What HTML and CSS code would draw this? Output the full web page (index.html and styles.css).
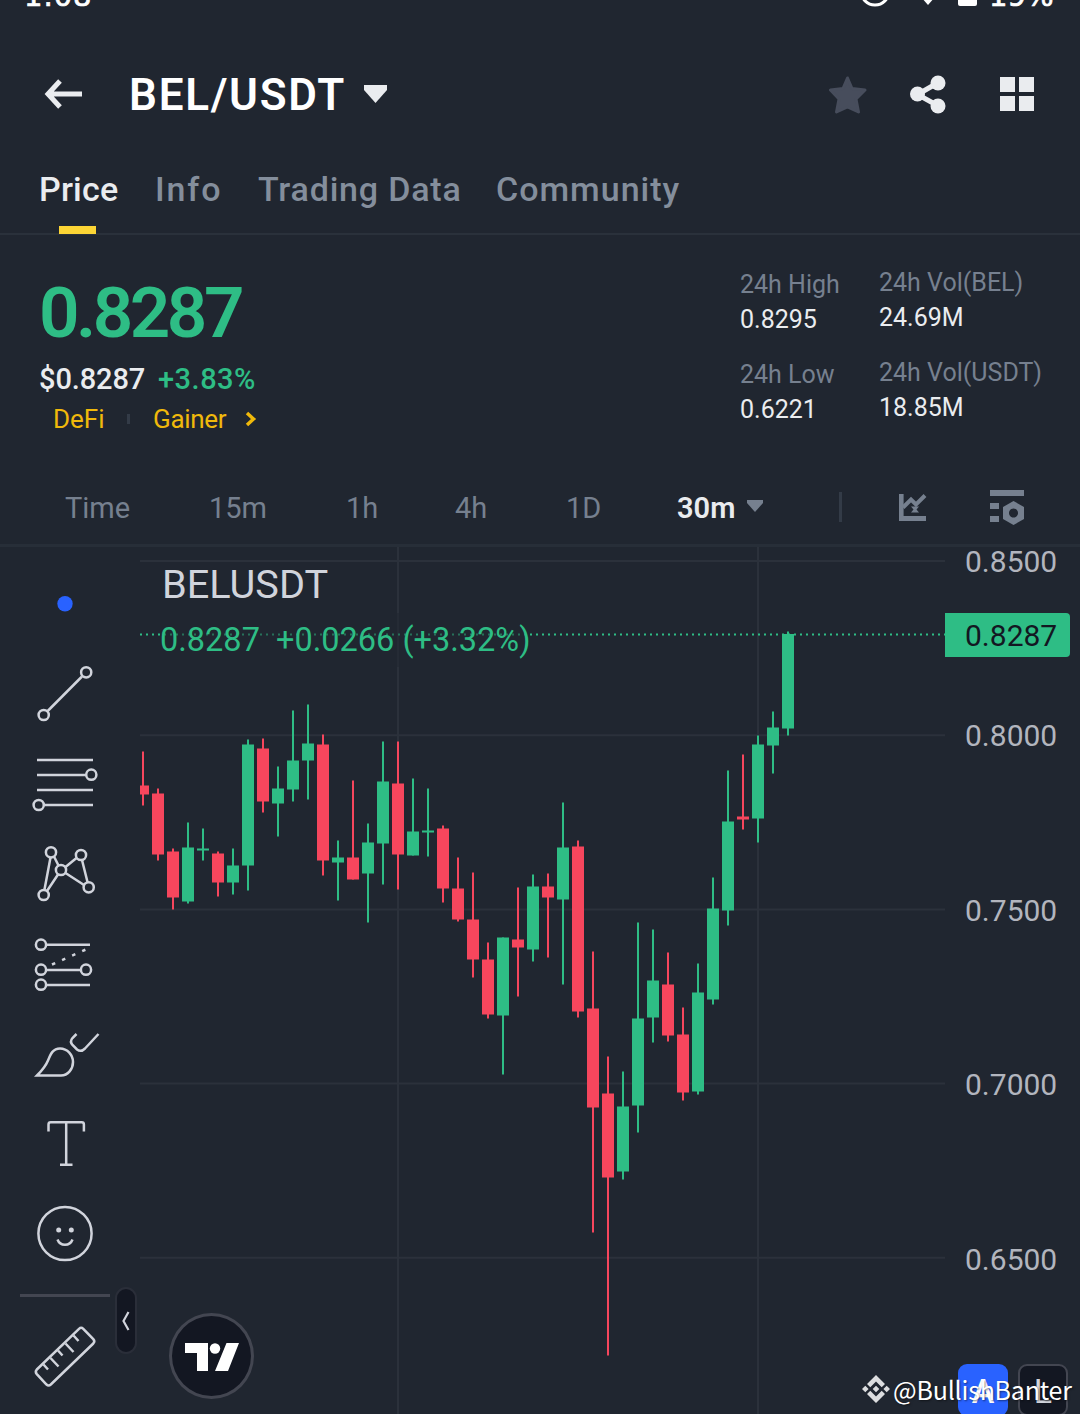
FILE: index.html
```html
<!DOCTYPE html>
<html lang="en">
<head>
  <meta charset="utf-8">
  <title>BEL/USDT</title>
  <link rel="stylesheet" href="styles.css">
</head>
<body>
  <div class="page">
    <div class="status">
      <span class="clock">1:08</span>
      <svg class="status-icons" width="120" height="8" viewBox="860 0 120 8">
        <circle cx="875" cy="-9" r="14" fill="none" stroke="#fff" stroke-width="3"/>
        <path d="M921-3h14l-7 8z" fill="#fff"/>
        <rect x="958" y="-20" width="19" height="26" rx="2" fill="#fff"/>
      </svg>
      <span class="battery">19%</span>
    </div>

    <div class="header">
      <svg class="back" width="40" height="32" viewBox="0 0 40 32">
        <path d="M17 3L5 16l12 13M5 16h34" fill="none" stroke="#eaecef" stroke-width="5"/>
      </svg>
      <h1 class="title">BEL/USDT</h1>
      <svg class="caret" width="24" height="18" viewBox="0 0 24 18">
        <path d="M0 0h23v5L11.500 18 0 5z" fill="#eaecef"/>
      </svg>
      <div class="actions">
        <svg width="38" height="40" viewBox="0 0 38 40">
          <path d="M18.500 3l4.500 10.500 13 1.500-9 9 2.500 13-11-5-11 5L10 24 1.500 15l12.500-1.500z" fill="#474d5c" stroke="#474d5c" stroke-width="3" stroke-linejoin="round"/>
        </svg>
        <svg width="36" height="40" viewBox="0 0 36 40">
          <path d="M27.500 9L7.500 20.500l20 11" fill="none" stroke="#eaecef" stroke-width="5"/>
          <g fill="#eaecef">
            <circle cx="28" cy="9" r="7.500"/>
            <circle cx="7.500" cy="20" r="7.500"/>
            <circle cx="28" cy="32" r="7.500"/>
          </g>
        </svg>
        <svg width="34" height="36" viewBox="0 0 34 36">
          <path d="M0 1h15v15H0zM19 1h15v15H19zM0 20h15v15H0zM19 20h15v15H19z" fill="#eaecef"/>
        </svg>
      </div>
    </div>

    <div class="tabs">
      <a class="tab active">Price</a>
      <a class="tab info">Info</a>
      <a class="tab data">Trading Data</a>
      <a class="tab community">Community</a>
    </div>

    <div class="summary">
      <div class="quote">
        <div class="last">0.8287</div>
        <div class="sub"><span class="usd">$0.8287</span><span class="change">+3.83%</span></div>
        <div class="tags">
          <span class="defi">DeFi</span>
          <i class="tag-line"></i>
          <span class="gainer">Gainer</span>
          <svg width="12" height="16" viewBox="0 0 12 16"><path d="M2 2l6.500 6L2 14" fill="none" stroke="#f0b90b" stroke-width="3.500"/></svg>
        </div>
      </div>
      <div class="stats">
        <div class="stat-col">
          <div class="label high">24h High</div>
          <div class="value">0.8295</div>
          <div class="label low">24h Low</div>
          <div class="value">0.6221</div>
        </div>
        <div class="stat-col vol">
          <div class="label">24h Vol(BEL)</div>
          <div class="value">24.69M</div>
          <div class="label">24h Vol(USDT)</div>
          <div class="value">18.85M</div>
        </div>
      </div>
    </div>

    <div class="intervals">
      <span>Time</span>
      <span>15m</span>
      <span>1h</span>
      <span>4h</span>
      <span>1D</span>
      <span class="current">30m
        <svg width="16" height="12" viewBox="0 0 16 12"><path d="M0 0h16v3L8 12 0 3z" fill="#76808f"/></svg>
      </span>
      <i class="divider"></i>
      <svg width="28" height="28" viewBox="0 0 28 28">
        <g fill="none" stroke="#76808f">
          <path d="M2.200 0v24.500H27" stroke-width="4.800"/>
          <path d="M4 13.500l8-8 5 5 9-9" stroke-width="4"/>
        </g>
        <path d="M12 12.500h8L17.500 15.500 20 18.500h-8l2.500-3z" fill="#76808f"/>
      </svg>
      <svg width="36" height="38" viewBox="0 0 36 38">
        <path d="M1 1h34v6H1zM1 14h9v6H1zM1 27h9v6H1z" fill="#76808f"/>
        <path fill-rule="evenodd" d="M24.500 12L35 18v12l-10.500 6L14 30V18zM24.500 19.500a4.500 4.500 0 1 0 .01 0z" fill="#76808f"/>
      </svg>
    </div>

    <div class="chart">
      <div class="tools">
        <svg viewBox="0 0 130 90"><circle cx="65" cy="44.700" r="7.700" fill="#2962ff" stroke="none"/></svg>
        <svg viewBox="0 0 130 90">
          <path d="M47.700 62L82 27.500"/>
          <circle cx="86.200" cy="23.300" r="5.100"/><circle cx="43.700" cy="66" r="5.100"/>
        </svg>
        <svg viewBox="0 0 130 90">
          <path d="M37 21h56M37 36h49M37 51h56M44 66h49"/>
          <circle cx="91.300" cy="35.700" r="5.100"/><circle cx="38.700" cy="66" r="5.100"/>
        </svg>
        <svg viewBox="0 0 130 90">
          <path d="M50.500 28.500l-6 32M54 27.500l4.500 9M58 45.500L47 62M65.500 38l11-9M65.500 44l18.500 12M82 31l5.500 22"/>
          <circle cx="51" cy="23.300" r="5.100"/><circle cx="81" cy="26" r="5.100"/><circle cx="61" cy="41" r="5.100"/>
          <circle cx="43.700" cy="66" r="5.100"/><circle cx="88.700" cy="58.300" r="5.100"/>
        </svg>
        <svg viewBox="0 0 130 90">
          <path d="M46 25.700h44M46 51h35M46 66h44"/>
          <path d="M52 45.500l34-15" stroke-dasharray="3.500 7.500"/>
          <circle cx="41" cy="25.700" r="5.100"/><circle cx="41" cy="50.700" r="5.100"/><circle cx="86" cy="50.700" r="5.100"/><circle cx="41" cy="65.700" r="5.100"/>
        </svg>
        <svg viewBox="0 0 130 90">
          <path d="M37 66.500h24c7 0 12-6.500 12-13.500S67.500 39.500 60 39.500c-7.500 0-9.500 6-12 12S40 63.500 37 66.500z"/>
          <path d="M76.500 25l-4 4q-3 3.500 0 7l4.500 4.500q4 3 8-1l13.500-14.500"/>
        </svg>
        <svg viewBox="0 0 130 90"><path d="M48.500 32.500v-7q0-2.200 2.200-2.200h31q2.200 0 2.200 2.200v7M66.200 23.500v42M60 65.700h12.500"/></svg>
        <svg viewBox="0 0 130 90">
          <circle cx="65" cy="44.500" r="26.600"/>
          <path d="M57.500 50.500a8 8 0 0 0 15 0"/>
          <g fill="#d1d4dc" stroke="none"><circle cx="58.700" cy="41" r="2.500"/><circle cx="71.300" cy="41" r="2.500"/></g>
        </svg>
        <div class="tools-line"></div>
        <svg viewBox="0 0 130 90">
          <path d="M36.800 57.500L79 16.800q2.200-2 4.300 0l10 10.400q2 2.200 0 4.300L50.800 72.500q-2.200 2-4.300 0l-9.700-10.400q-2-2.300 0-4.600z"/>
          <path d="M43.500 52.500l4.500 5M50.500 46l8 8.500M58 38.500l4.500 5M65.500 31.500l8 8.500M73.500 23.500l5 5.500"/>
        </svg>
      </div>

      <svg class="plot" width="805" height="867" viewBox="140 547 805 867">
        <g class="grid">
          <path d="M140 561h805M140 735.300h805M140 909.500h805M140 1083.500h805M140 1257.800h805"/>
          <path d="M398 547v867M758 547v867"/>
        </g>
        <g id="candles"></g>
        <path class="last-line" d="M140 634.500h805"/>
      </svg>

      <div class="axis">
        <span>0.8500</span>
        <span>0.8000</span>
        <span>0.7500</span>
        <span>0.7000</span>
        <span>0.6500</span>
      </div>

      <div class="legend">
        <div class="symbol">BELUSDT</div>
        <div class="delta">0.8287&nbsp; +0.0266 (+3.32%)</div>
      </div>
      <div class="price-tag">0.8287</div>

      <div class="toggle">
        <svg width="8" height="20" viewBox="0 0 8 20"><path d="M6.500 1L1.500 10l5 9" fill="none" stroke="#d1d4dc" stroke-width="2.200"/></svg>
      </div>
      <div class="tv">
        <svg width="54" height="29" viewBox="0 0 54 29">
          <path d="M0 0h23v28H12V10H0zM41.500 0H54L43 28H30z" fill="#fff"/>
          <circle cx="30" cy="5.500" r="5.200" fill="#fff"/>
        </svg>
      </div>
      <div class="scale auto">A</div>
      <div class="scale log">L</div>
      <div class="author">
        <svg width="28" height="28" viewBox="0 0 28 28" fill="#dcdddf">
          <path d="M14 0l9 9-3.300 3.300L14 6.600l-5.700 5.700L5 9zM14 28l9-9-3.300-3.300-5.700 5.700-5.700-5.700L5 19zM14 10.700l3.300 3.300-3.300 3.300-3.300-3.300zM3.300 10.700L6.600 14l-3.300 3.300L0 14zM24.700 10.700L28 14l-3.300 3.300-3.300-3.300z"/>
        </svg>
        <span>@BullishBanter</span>
      </div>
    </div>
  </div>
  <script src="chart.js"></script>
</body>
</html>
```

FILE: styles.css
```css
* {
  margin: 0;
  padding: 0;
  box-sizing: border-box;
}
body {
  background: #202630;
  font-family: Roboto, "Liberation Sans", sans-serif;
}
svg {
  display: block;
  flex: none;
}
.page {
  width: 1080px;
  height: 1414px;
  overflow: hidden;
  color: #eaecef;
  white-space: nowrap;
}

/* status bar */
.status {
  height: 8px;
  overflow: hidden;
  display: flex;
  align-items: flex-end;
  padding-left: 24px;
  color: #fff;
  font: 29px/30px "DejaVu Sans", sans-serif;
  -webkit-text-stroke: 0.7px #fff;
}
.clock {
  width: 836px;
  margin-bottom: -3px;
  letter-spacing: 0.8px;
}
.battery {
  margin: 0 0 -3px 9px;
}
.status-icons {
  align-self: flex-start;
}

/* header */
.header {
  height: 142px;
  padding: 29px 46px 0 43px;
  display: flex;
  align-items: center;
}
.title {
  width: 218px;
  margin: 2px 17px 0 46px;
  font-size: 44px;
  line-height: 50px;
  font-weight: 600;
  letter-spacing: 1.7px;
  color: #fff;
}
.actions {
  margin-left: auto;
  display: flex;
  align-items: center;
}
.actions svg:nth-child(1) {
  margin-right: 43px;
  margin-top: 3px;
}
.actions svg:nth-child(2) {
  margin-right: 54px;
}

/* tabs */
.tabs {
  height: 85px;
  padding: 0 39px;
  display: grid;
  grid-template-columns: 116px 103px 238px 200px;
  border-bottom: 2px solid #2a313b;
}
.tab {
  font-size: 34px;
  line-height: 78px;
  font-weight: 500;
  letter-spacing: 0.8px;
  color: #848e9c;
}
.active {
  letter-spacing: 0.2px;
  color: #eaecef;
}
.info {
  letter-spacing: 1.9px;
}
.community {
  letter-spacing: 1px;
}
.active::after {
  content: "";
  display: block;
  width: 37px;
  height: 8px;
  margin: -2px 0 0 20px;
  background: #fcd535;
}

/* price summary */
.summary {
  height: 237px;
  padding: 35px 0 0 39px;
  display: flex;
}
.quote {
  width: 701px;
}
.last {
  font-size: 71px;
  line-height: 86px;
  margin-bottom: -2px;
  font-weight: 600;
  letter-spacing: -3.5px;
  color: #2ebd85;
}
.sub {
  display: flex;
  font-size: 29px;
  line-height: 50px;
  font-weight: 500;
}
.usd {
  width: 119px;
  letter-spacing: -0.1px;
}
.change {
  letter-spacing: 0.5px;
  color: #2ebd85;
}
.tags {
  display: flex;
  align-items: center;
  padding-left: 14px;
  font-size: 26px;
  line-height: 30px;
  color: #f0b90b;
}
.defi {
  width: 74px;
}
.tag-line {
  width: 3px;
  height: 10px;
  margin-right: 23px;
  background: #333b47;
}
.gainer {
  width: 92px;
  letter-spacing: -0.3px;
}
.stats {
  display: flex;
  font-size: 25px;
}
.stat-col {
  width: 139px;
}
.vol {
  margin-top: -2px;
}
.label {
  line-height: 30px;
  margin-bottom: 2px;
  color: #76808f;
}
.value {
  line-height: 36px;
  margin-bottom: 22px;
}

/* intervals */
.intervals {
  height: 75px;
  padding-left: 65px;
  display: grid;
  grid-template-columns: 144px 137px 109px 111px 111px 162px 60px 90px 1fr;
  align-items: center;
  border-bottom: 3px solid #272e38;
  font-size: 29px;
  color: #76808f;
}
.current {
  display: flex;
  align-items: center;
  font-weight: 600;
  color: #eaecef;
}
.current svg {
  margin: -4px 0 0 12px;
}
.divider {
  width: 3px;
  height: 30px;
  margin-top: -2px;
  background: #333b47;
}

/* chart */
.chart {
  height: 867px;
  position: relative;
  display: flex;
}
.tools {
  width: 140px;
  padding-top: 12px;
}
.tools svg {
  width: 130px;
  height: 90px;
  fill: none;
  stroke: #d1d4dc;
  stroke-width: 2.5px;
}
.tools-line {
  width: 90px;
  height: 3px;
  margin: 15px 0 15px 20px;
  background: #434651;
}
.grid path {
  stroke: #2b313b;
  stroke-width: 2px;
}
.up {
  fill: #2ebd85;
}
.down {
  fill: #f6465d;
}
.last-line {
  stroke: #2ebd85;
  stroke-width: 2px;
  stroke-dasharray: 2px 4px;
}
.axis {
  padding-left: 20px;
  color: #b2b5be;
  font-size: 30px;
}
.axis span {
  display: block;
  line-height: 30px;
  margin-bottom: 144.4px;
}
.legend {
  position: absolute;
  left: 152px;
  top: 10px;
  padding: 0 10px;
}
.symbol {
  font-size: 39.7px;
  line-height: 56px;
  color: #d1d4dc;
}
.delta {
  margin-left: -2px;
  font-size: 32.5px;
  line-height: 54px;
  color: #2ebd85;
  background: rgba(32, 38, 48, 0.5);
}
.price-tag {
  position: absolute;
  left: 945px;
  top: 66px;
  width: 125px;
  height: 44px;
  padding-left: 20px;
  border-radius: 0 4px 4px 0;
  background: #2ebd85;
  color: #131722;
  font-size: 30px;
  line-height: 45px;
}
.toggle {
  position: absolute;
  left: 115px;
  top: 740px;
  width: 22px;
  height: 67px;
  display: flex;
  align-items: center;
  justify-content: center;
  border: 2px solid #2a2e39;
  border-radius: 11px;
  background: #131722;
}
.tv {
  position: absolute;
  left: 169px;
  top: 766px;
  width: 85px;
  height: 86px;
  display: flex;
  align-items: center;
  justify-content: center;
  padding-top: 2px;
  border: 3px solid #434651;
  border-radius: 50%;
  background: #131722;
}
.scale {
  position: absolute;
  top: 817px;
  width: 50px;
  height: 52px;
  border-radius: 9px;
  text-align: center;
  font-size: 34px;
  line-height: 55px;
}
.auto {
  left: 958px;
  background: #2962ff;
  color: #fff;
  font-weight: 500;
}
.log {
  left: 1018px;
  border: 2px solid #434651;
  background: #131722;
  color: #d1d4dc;
  line-height: 51px;
}
.author {
  position: absolute;
  left: 862px;
  top: 824px;
  display: flex;
  align-items: center;
  gap: 3px;
  font: 25px/36px "Noto Sans CJK SC", sans-serif;
  letter-spacing: -0.2px;
  color: #fff;
  text-shadow: 1px 1px 2px rgba(0, 0, 0, 0.5);
}
```

FILE: chart.js
```js
// high, body top, body bottom, low, up
let candles = [
  [751.5, 785.5, 794.5, 805.5, 0],
  [788.5, 793.5, 854.5, 860.5, 0],
  [848.5, 851.5, 897.5, 909.5, 0],
  [822.5, 847.5, 901.5, 903.5, 1],
  [828.5, 848.5, 850.5, 860.5, 1],
  [851.5, 853.5, 882.5, 896.5, 0],
  [848.5, 865.5, 882.5, 894.5, 1],
  [739.5, 744.5, 865.5, 890.5, 1],
  [738.5, 748.5, 801.5, 812.5, 0],
  [766.5, 788.5, 803.5, 836.5, 1],
  [710.5, 760.5, 789.5, 801.5, 1],
  [704.5, 743.5, 760.5, 799.5, 1],
  [734.5, 744.5, 860.5, 875.5, 0],
  [840.5, 857.5, 862.5, 900.5, 1],
  [780.5, 857.5, 879.5, 879.5, 0],
  [823.5, 842.5, 873.5, 922.5, 1],
  [741.5, 781.5, 843.5, 884.5, 1],
  [741.5, 783.5, 854.5, 889.5, 0],
  [778.5, 831.5, 855.5, 855.5, 1],
  [788.5, 830.5, 832.5, 856.5, 1],
  [825.5, 828.5, 888.5, 902.5, 0],
  [857.5, 888.5, 919.5, 921.5, 0],
  [872.5, 919.5, 959.5, 977.5, 0],
  [942.5, 959.5, 1014.5, 1018.5, 0],
  [937.5, 937.5, 1015.5, 1074.5, 1],
  [887.5, 939.5, 947.5, 996.5, 0],
  [874.5, 886.5, 949.5, 961.5, 1],
  [873.5, 886.5, 897.5, 957.5, 0],
  [802.5, 847.5, 899.5, 984.5, 1],
  [840.5, 846.5, 1011.5, 1017.5, 0],
  [951.5, 1008.5, 1107.5, 1232.5, 0],
  [1056.5, 1093.5, 1177.5, 1355.5, 0],
  [1071.5, 1106.5, 1171.5, 1179.5, 1],
  [922.5, 1018.5, 1105.5, 1132.5, 1],
  [929.5, 980.5, 1017.5, 1042.5, 1],
  [952.5, 984.5, 1035.5, 1041.5, 0],
  [1007.5, 1034.5, 1092.5, 1100.5, 0],
  [963.5, 992.5, 1091.5, 1094.5, 1],
  [877.5, 908.5, 999.5, 1004.5, 1],
  [770.5, 821.5, 910.5, 925.5, 1],
  [754.5, 816.5, 819.5, 829.5, 0],
  [735.5, 744.5, 818.5, 842.5, 1],
  [711.5, 727.5, 745.5, 773.5, 1],
  [631.5, 634, 728.5, 735.5, 1]
];

let oCandles = document.querySelector("#candles");

function addRect(x, y, width, height, name) {
  let oRect = document.createElementNS("http://www.w3.org/2000/svg", "rect");
  oRect.setAttribute("x", x);
  oRect.setAttribute("y", y);
  oRect.setAttribute("width", width);
  oRect.setAttribute("height", height);
  oRect.setAttribute("class", name);
  oCandles.appendChild(oRect);
}

candles.forEach(function(item, index) {
  let center = 143 + index * 15;
  let name = item[4] ? "up" : "down";
  addRect(center - 1, item[0], 2, item[3] - item[0], name);
  addRect(center - 6, item[1], 12, item[2] - item[1], name);
});
```
